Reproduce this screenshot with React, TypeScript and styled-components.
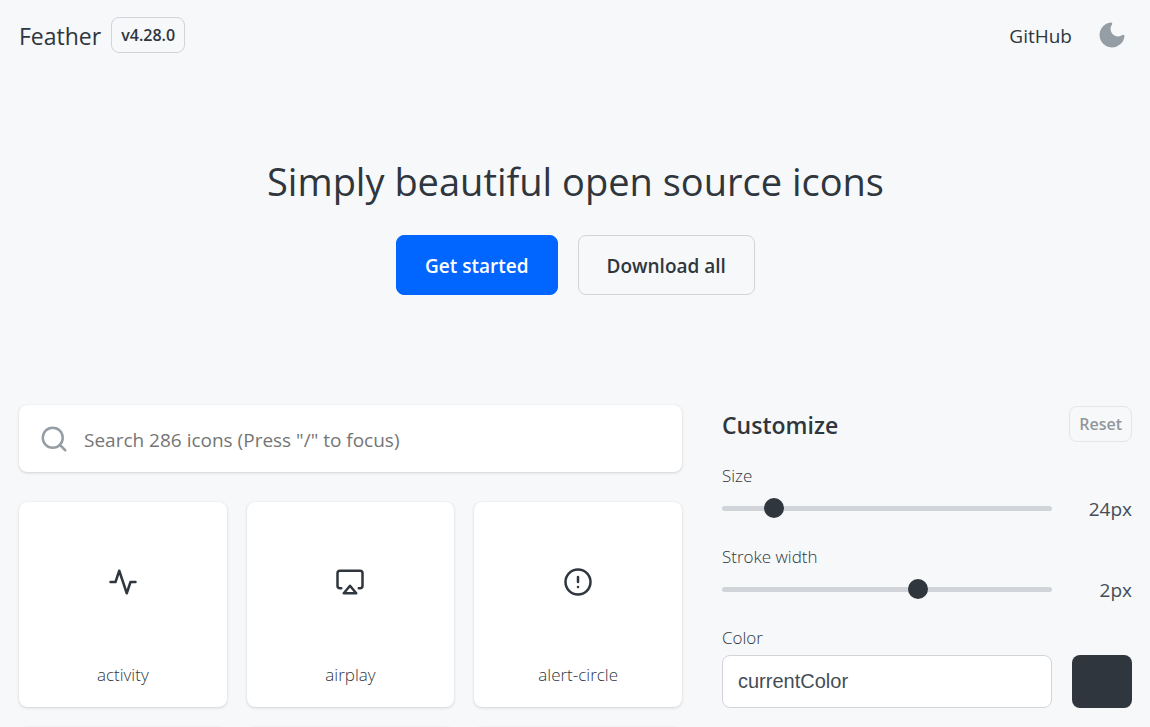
import React, { useState } from 'react';
import styled, { createGlobalStyle, ThemeProvider } from 'styled-components';
import { FiActivity, FiAirplay, FiAlertCircle, FiMoon, FiSearch } from 'react-icons/fi';
import type { IconType } from 'react-icons';

const theme = {
  background: '#f6f8fa',
  surface: '#ffffff',
  text: '#2f363d',
  textSoft: '#444d56',
  muted: '#959da5',
  border: '#d1d5da',
  primary: '#0066ff',
  shadow: '0 0 1px rgba(0, 0, 0, 0.1), 0 1px 3px rgba(0, 0, 0, 0.14)',
  radius: '8px',
};

const GlobalStyle = createGlobalStyle`
  *, *::before, *::after { box-sizing: border-box; }
  body {
    margin: 0;
    background: ${theme.background};
    color: ${theme.text};
    font-family: 'Segoe UI', 'Open Sans', 'Noto Sans', sans-serif;
    font-size: 19px;
    line-height: 30px;
  }
  h1, h2 { margin: 0; }
  button, input { font: inherit; color: inherit; }
`;

const Page = styled.div`
  padding: 0 18px 0 19px;
`;

const Header = styled.header`
  display: flex;
  align-items: center;
  justify-content: space-between;
  padding: 17px 0;
`;

const HeaderGroup = styled.div<{ $gap: number }>`
  display: flex;
  align-items: center;
  gap: ${(p) => p.$gap}px;
`;

const Brand = styled.span`
  padding-top: 2px;
  font-size: 23px;
  line-height: 34px;
`;

const NavLink = styled.a`
  padding-top: 2px;
  color: ${theme.text};
  line-height: 28px;
  text-decoration: none;
`;

const SmallButton = styled.button`
  height: 36px;
  padding: 0 9px;
  border: 1px solid ${theme.border};
  border-radius: ${theme.radius};
  background: transparent;
  font-size: 16px;
  font-weight: 600;
  line-height: 24px;

  &:disabled {
    opacity: 0.5;
  }
`;

const IconButton = styled.button`
  display: flex;
  padding: 0;
  margin-right: 5px;
  border: 0;
  background: transparent;
  color: ${theme.muted};

  svg {
    fill: currentColor;
  }
`;

const Hero = styled.section`
  display: flex;
  flex-direction: column;
  align-items: center;
  gap: 26px;
  padding: 83px 0 110px;
`;

const HeroTitle = styled.h1`
  font-size: 38px;
  font-weight: 370;
  line-height: 56px;
  text-align: center;
`;

const HeroActions = styled.div`
  display: flex;
  gap: 20px;
`;

const LargeButton = styled.a<{ $primary?: boolean }>`
  padding: 15px 28px 13px;
  border: 1px solid ${(p) => (p.$primary ? theme.primary : theme.border)};
  border-radius: ${theme.radius};
  background: ${(p) => (p.$primary ? theme.primary : 'transparent')};
  color: ${(p) => (p.$primary ? '#ffffff' : theme.text)};
  font-weight: 600;
  text-decoration: none;
`;

const Columns = styled.main`
  display: grid;
  grid-template-columns: minmax(0, 1fr) minmax(0, 410px);
  align-items: start;
  gap: 40px;
`;

const Browser = styled.section`
  display: flex;
  flex-direction: column;
  gap: 30px;
`;

const SearchBox = styled.label`
  display: flex;
  align-items: center;
  gap: 15px;
  height: 67px;
  padding: 0 20px;
  border-radius: ${theme.radius};
  background: ${theme.surface};
  box-shadow: ${theme.shadow};
  color: ${theme.muted};
`;

const SearchInput = styled.input`
  flex: 1;
  min-width: 0;
  padding: 2px 0 0;
  border: 0;
  outline: 0;
  background: transparent;
  color: ${theme.text};

  &::placeholder {
    color: #757575;
  }
`;

const IconGrid = styled.div`
  display: grid;
  grid-template-columns: repeat(auto-fill, minmax(180px, 1fr));
  gap: 20px;
`;

const Card = styled.button`
  display: flex;
  flex-direction: column;
  align-items: center;
  height: 205px;
  padding: 0 16px 19px;
  border: 0;
  border-radius: ${theme.radius};
  background: ${theme.surface};
  box-shadow: ${theme.shadow};
`;

const PendingCard = styled.div`
  height: 205px;
  border-radius: ${theme.radius};
  background: ${theme.surface};
  box-shadow: ${theme.shadow};
`;

const CardIcon = styled.span`
  display: flex;
  flex: 1;
  align-items: center;
`;

const CardName = styled.span`
  color: ${theme.text};
  font-size: 17px;
  font-weight: 350;
  line-height: 26px;
`;

const Panel = styled.aside`
  display: flex;
  flex-direction: column;
  gap: 22px;
  padding-top: 1px;
`;

const PanelHeader = styled.div`
  display: flex;
  align-items: center;
  justify-content: space-between;
`;

const PanelTitle = styled.h2`
  padding-top: 2px;
  font-size: 23px;
  font-weight: 600;
  line-height: 34px;
`;

const Field = styled.div`
  display: flex;
  flex-direction: column;
  gap: 5px;
`;

const FieldLabel = styled.label`
  color: ${theme.text};
  font-size: 17px;
  font-weight: 350;
  line-height: 24px;
`;

const FieldRow = styled.div`
  display: grid;
  grid-template-columns: minmax(0, 1fr) 60px;
  align-items: center;
  gap: 20px;
`;

const Slider = styled.input`
  appearance: none;
  width: 100%;
  height: 5px;
  margin: 0;
  border-radius: 3px;
  background: ${theme.border};

  &::-webkit-slider-thumb {
    appearance: none;
    width: 20px;
    height: 20px;
    border-radius: 50%;
    background: ${theme.text};
  }
`;

const Value = styled.output`
  padding-top: 2px;
  color: ${theme.textSoft};
  line-height: 28px;
  text-align: right;
`;

const ColorText = styled.input`
  width: 100%;
  height: 53px;
  padding: 0 15px;
  border: 1px solid ${theme.border};
  border-radius: ${theme.radius};
  background: ${theme.surface};
  color: ${theme.textSoft};
  font-family: Arial, 'Liberation Sans', sans-serif;
  font-size: 20px;
`;

const Swatch = styled.input`
  appearance: none;
  width: 100%;
  height: 53px;
  padding: 0;
  border: 0;
  border-radius: ${theme.radius};
  overflow: hidden;
  background: ${theme.text};

  &::-webkit-color-swatch-wrapper {
    padding: 0;
  }
  &::-webkit-color-swatch {
    border: 0;
  }
`;

const icons: { name: string; icon: IconType }[] = [
  { name: 'activity', icon: FiActivity },
  { name: 'airplay', icon: FiAirplay },
  { name: 'alert-circle', icon: FiAlertCircle },
];

// Cards below the fold whose icons have not been loaded yet.
const pendingCards = [0, 1, 2];

export default function App() {
  const [query, setQuery] = useState('');
  const [size, setSize] = useState(24);
  const [stroke, setStroke] = useState(2);
  const [color, setColor] = useState('currentColor');
  const pristine = size === 24 && stroke === 2 && color === 'currentColor';

  const reset = () => {
    setSize(24);
    setStroke(2);
    setColor('currentColor');
  };

  return (
    <ThemeProvider theme={theme}>
      <GlobalStyle />
      <Page>
        <Header>
          <HeaderGroup $gap={10}>
            <Brand>Feather</Brand>
            <SmallButton>v4.28.0</SmallButton>
          </HeaderGroup>
          <HeaderGroup $gap={25}>
            <NavLink href="#github">GitHub</NavLink>
            <IconButton aria-label="Toggle dark mode">
              <FiMoon size={30} />
            </IconButton>
          </HeaderGroup>
        </Header>

        <Hero>
          <HeroTitle>Simply beautiful open source icons</HeroTitle>
          <HeroActions>
            <LargeButton $primary href="#start">Get started</LargeButton>
            <LargeButton href="#download">Download all</LargeButton>
          </HeroActions>
        </Hero>

        <Columns>
          <Browser>
            <SearchBox>
              <FiSearch size={30} />
              <SearchInput
                aria-label="Search icons"
                placeholder={'Search 286 icons (Press "/" to focus)'}
                value={query}
                onChange={(e) => setQuery(e.target.value)}
              />
            </SearchBox>
            <IconGrid>
              {icons
                .filter(({ name }) => name.includes(query.trim().toLowerCase()))
                .map(({ name, icon: Icon }) => (
                  <Card key={name}>
                    <CardIcon>
                      <Icon size={(size * 5) / 4} strokeWidth={stroke} color={color} />
                    </CardIcon>
                    <CardName>{name}</CardName>
                  </Card>
                ))}
              {query === '' && pendingCards.map((key) => <PendingCard key={key} />)}
            </IconGrid>
          </Browser>

          <Panel>
            <PanelHeader>
              <PanelTitle>Customize</PanelTitle>
              <SmallButton disabled={pristine} onClick={reset}>Reset</SmallButton>
            </PanelHeader>
            <Field>
              <FieldLabel htmlFor="size">Size</FieldLabel>
              <FieldRow>
                <Slider id="size" type="range" min={12} max={100} step={1} value={size}
                  onChange={(e) => setSize(Number(e.target.value))} />
                <Value htmlFor="size">{size}px</Value>
              </FieldRow>
            </Field>
            <Field>
              <FieldLabel htmlFor="stroke">Stroke width</FieldLabel>
              <FieldRow>
                <Slider id="stroke" type="range" min={0.5} max={3} step={0.25} value={stroke}
                  onChange={(e) => setStroke(Number(e.target.value))} />
                <Value htmlFor="stroke">{stroke}px</Value>
              </FieldRow>
            </Field>
            <Field>
              <FieldLabel htmlFor="color">Color</FieldLabel>
              <FieldRow>
                <ColorText id="color" type="text" value={color}
                  onChange={(e) => setColor(e.target.value)} />
                <Swatch type="color" aria-label="Pick a color"
                  value={color === 'currentColor' ? theme.text : color}
                  onChange={(e) => setColor(e.target.value)} />
              </FieldRow>
            </Field>
          </Panel>
        </Columns>
      </Page>
    </ThemeProvider>
  );
}
